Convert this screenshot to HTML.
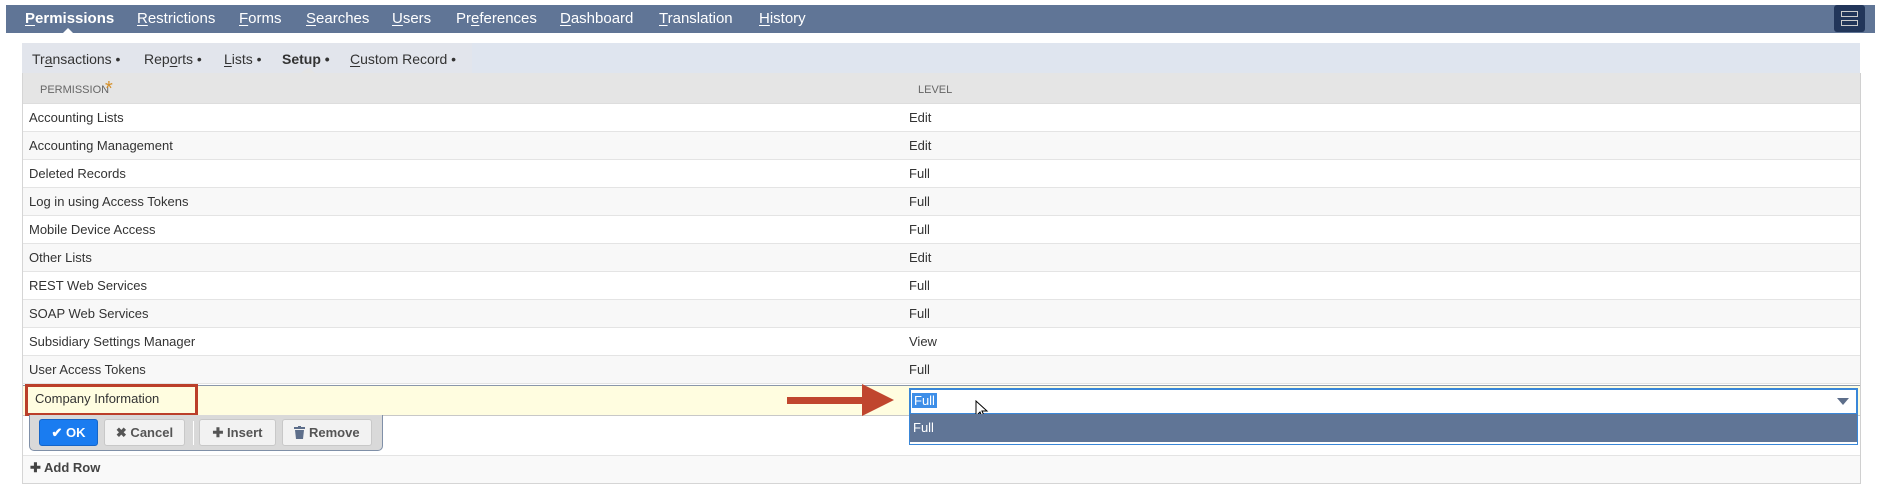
<!DOCTYPE html>
<html><head><meta charset="utf-8"><style>
*{margin:0;padding:0;box-sizing:border-box}
body{width:1883px;height:486px;background:#fff;font-family:"Liberation Sans",sans-serif;position:relative;overflow:hidden;color:#333}
.a{position:absolute}
u{text-decoration:underline;text-decoration-thickness:1px;text-underline-offset:2px}
.tab{position:absolute;top:10px;font-size:15px;color:#fff}
.st{position:absolute;top:51px;font-size:14px;color:#333}
.row{position:absolute;left:23px;width:1837px;height:28px;border-bottom:1px solid #e4e4e4;font-size:13px;line-height:27px}
.row span{position:absolute}
.btn{position:absolute;top:419px;height:27px;border:1px solid #c8c8c8;background:#f2f2f2;border-radius:3px;font-size:13px;font-weight:bold;color:#555;line-height:25px;text-align:center}
</style></head><body>
<div class="a" style="left:6px;top:5px;width:1869px;height:28px;background:#607596"></div>
<span class="tab" style="left:25px;font-weight:bold"><u>P</u>ermissions</span>
<span class="tab" style="left:137px"><u>R</u>estrictions</span>
<span class="tab" style="left:239px"><u>F</u>orms</span>
<span class="tab" style="left:306px"><u>S</u>earches</span>
<span class="tab" style="left:392px"><u>U</u>sers</span>
<span class="tab" style="left:456px">Pr<u>e</u>ferences</span>
<span class="tab" style="left:560px"><u>D</u>ashboard</span>
<span class="tab" style="left:659px"><u>T</u>ranslation</span>
<span class="tab" style="left:759px"><u>H</u>istory</span>
<div class="a" style="left:62px;top:28px;width:0;height:0;border-left:6px solid transparent;border-right:6px solid transparent;border-bottom:6px solid #fff"></div>
<div class="a" style="left:1834px;top:5px;width:31px;height:27px;background:#22365a;border-radius:3px"></div>
<div class="a" style="left:1841px;top:11px;width:17px;height:6px;border:1.5px solid #ccc"></div>
<div class="a" style="left:1841px;top:20px;width:17px;height:6px;border:1.5px solid #ccc"></div>

<div class="a" style="left:22px;top:43px;width:1838px;height:30px;background:#dfe5ef"></div>
<div class="a" style="left:22px;top:43px;width:450px;height:30px;background:#e2e5ec"></div>
<span class="st" style="left:32px">Tr<u>a</u>nsactions •</span>
<span class="st" style="left:144px">Rep<u>o</u>rts •</span>
<span class="st" style="left:224px"><u>L</u>ists •</span>
<span class="st" style="left:282px;font-weight:bold">Setup •</span>
<span class="st" style="left:350px"><u>C</u>ustom Record •</span>
<div class="a" style="left:301px;top:67px;width:0;height:0;border-left:7px solid transparent;border-right:7px solid transparent;border-bottom:6px solid #e5e5e5"></div>

<div class="a" style="left:22px;top:73px;width:1px;height:411px;background:#d5d5d5"></div>
<div class="a" style="left:1860px;top:73px;width:1px;height:411px;background:#d0d0d0"></div>
<div class="a" style="left:23px;top:73px;width:1837px;height:31px;background:#e5e5e5;border-bottom:1px solid #ddd"></div>
<span class="a" style="left:40px;top:84px;font-size:11px;color:#666">PERMISSION</span><span class="a" style="left:105px;top:79px;font-size:20px;line-height:20px;color:#d5902a">*</span>
<span class="a" style="left:918px;top:84px;font-size:11px;color:#666">LEVEL</span>

<div class="row" style="top:104px;background:#fff"><span style="left:6px">Accounting Lists</span><span style="left:886px">Edit</span></div>
<div class="row" style="top:132px;background:#f8f8f8"><span style="left:6px">Accounting Management</span><span style="left:886px">Edit</span></div>
<div class="row" style="top:160px;background:#fff"><span style="left:6px">Deleted Records</span><span style="left:886px">Full</span></div>
<div class="row" style="top:188px;background:#f8f8f8"><span style="left:6px">Log in using Access Tokens</span><span style="left:886px">Full</span></div>
<div class="row" style="top:216px;background:#fff"><span style="left:6px">Mobile Device Access</span><span style="left:886px">Full</span></div>
<div class="row" style="top:244px;background:#f8f8f8"><span style="left:6px">Other Lists</span><span style="left:886px">Edit</span></div>
<div class="row" style="top:272px;background:#fff"><span style="left:6px">REST Web Services</span><span style="left:886px">Full</span></div>
<div class="row" style="top:300px;background:#f8f8f8"><span style="left:6px">SOAP Web Services</span><span style="left:886px">Full</span></div>
<div class="row" style="top:328px;background:#fff"><span style="left:6px">Subsidiary Settings Manager</span><span style="left:886px">View</span></div>
<div class="row" style="top:356px;background:#f8f8f8"><span style="left:6px">User Access Tokens</span><span style="left:886px">Full</span></div>

<div class="a" style="left:23px;top:385px;width:1837px;height:31px;background:#fffde0;border-top:1px solid #8a97aa;border-bottom:1px solid #c8c8c8"></div>
<div class="a" style="left:25px;top:384px;width:173px;height:32px;border:3px solid #bb3f2a"></div>
<span class="a" style="left:35px;top:391px;font-size:13px">Company Information</span>
<div class="a" style="left:787px;top:397px;width:78px;height:7px;background:#c0462e"></div>
<div class="a" style="left:862px;top:384px;width:0;height:0;border-top:16px solid transparent;border-bottom:16px solid transparent;border-left:32px solid #c0462e"></div>

<div class="a" style="left:909px;top:388px;width:949px;height:27px;background:#fff;border:2px solid #3a87d8"></div>
<span class="a" style="left:912px;top:393px;font-size:13px;background:#3d8ee8;color:#fff;padding:0 2px">Full</span>
<div class="a" style="left:1837px;top:398px;width:0;height:0;border-left:6px solid transparent;border-right:6px solid transparent;border-top:7px solid #5d6e8a"></div>
<svg class="a" style="left:975px;top:400px" width="14" height="20" viewBox="0 0 14 20"><path d="M1 1 L1 16 L5 12 L8 19 L10 18 L7 11 L12 11 Z" fill="#fff" stroke="#000" stroke-width="1"/></svg>
<div class="a" style="left:909px;top:414px;width:949px;height:31px;background:#fff;border:1px solid #3a87d8;border-top:none"></div>
<div class="a" style="left:910px;top:414px;width:947px;height:28px;background:#607596"></div>
<span class="a" style="left:913px;top:420px;font-size:13px;color:#fff">Full</span>

<div class="a" style="left:29px;top:415px;width:354px;height:36px;background:#d9d9d9;border:1px solid #8090a8;border-top:none;border-radius:0 0 5px 5px"></div>
<div class="btn" style="left:39px;width:59px;background:#1a7cf0;border-color:#1565c8;color:#fff">✔ OK</div>
<div class="btn" style="left:104px;width:81px">✖ Cancel</div>
<div class="a" style="left:193px;top:421px;width:1px;height:24px;background:#fff"></div>
<div class="btn" style="left:199px;width:77px">✚ Insert</div>
<div class="btn" style="left:282px;width:90px"><svg width="11" height="13" viewBox="0 0 11 13" style="vertical-align:-2px"><rect x="0" y="1" width="11" height="2" fill="#5d6e8a"/><rect x="4" y="0" width="3" height="2" fill="#5d6e8a"/><path d="M1 4 H10 L9 13 H2 Z" fill="#5d6e8a"/></svg> Remove</div>

<div class="a" style="left:23px;top:455px;width:1837px;height:29px;background:#f9f9f9;border-top:1px solid #e4e4e4;border-bottom:1px solid #d5d5d5"></div>
<span class="a" style="left:30px;top:460px;font-size:13px;font-weight:bold;color:#444">✚ Add Row</span>
</body></html>
